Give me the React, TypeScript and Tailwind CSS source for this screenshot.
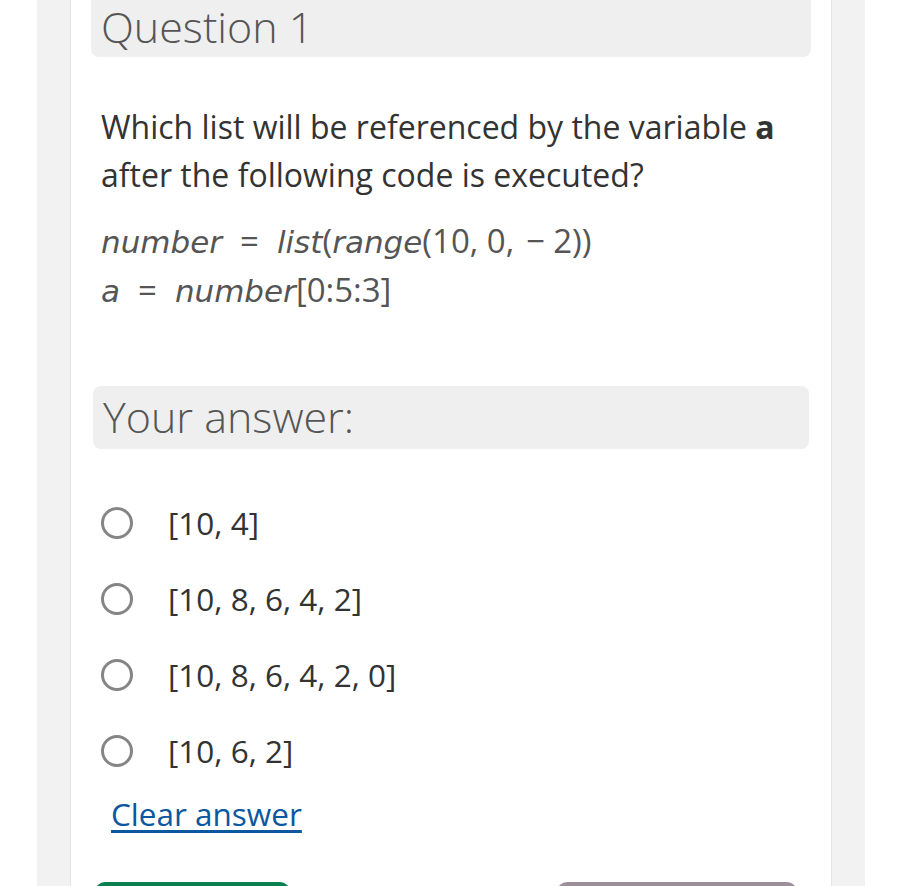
const options = ['[10, 4]', '[10, 8, 6, 4, 2]', '[10, 8, 6, 4, 2, 0]', '[10, 6, 2]']

function Radio() {
  return <span className="block w-[32px] h-[32px] rounded-full border-[3px] border-[#858585] bg-white shrink-0" />
}

// italic identifier in the formula
function V({ children }: { children: string }) {
  return (
    <i className="text-[31px]" style={{ fontFamily: '"DejaVu Sans", sans-serif' }}>
      {children}
    </i>
  )
}

export default function App() {
  return (
    <div className="min-h-screen bg-white" style={{ fontFamily: '"Open Sans", "Liberation Sans", sans-serif' }}>
      <div className="ml-[37px] w-[828px] h-[886px] overflow-hidden bg-[#f2f2f2] px-[33px]">
        <div className="h-full bg-white border-x border-[#e4e4e4] pl-[20px] pr-[20px]">
          {/* header */}
          <div className="h-[57px] bg-[#efefef] rounded-b-[8px] px-[10px] flex items-center">
            <h2 className="text-[43px] leading-[50px] font-light text-[#555] -mt-[3px]">Question 1</h2>
          </div>

          <p className="mt-[46px] px-[10px] text-[32px] leading-[48px] text-[#333]">
            Which list will be referenced by the variable <b className="font-bold">a</b> after the following code is executed?
          </p>

          <div className="mt-[18px] px-[10px] text-[33px] leading-[48px] text-[#555] whitespace-nowrap">
            <div>
              <V>number</V>
              <span className="mx-[18px]">=</span>
              <V>list</V>(<V>range</V>(10, 0,<span className="ml-[12px] mr-[8px]">−</span>2))
            </div>
            <div>
              <V>a</V>
              <span className="mx-[18px]">=</span>
              <V>number</V>[0:5:3]
            </div>
          </div>

          <div className="mt-[71px] ml-[2px] mr-[2px] h-[63px] bg-[#efefef] rounded-[8px] px-[10px] flex items-center">
            <span className="text-[43px] font-light text-[#555]">Your answer:</span>
          </div>

          <div className="mt-[58px] flex flex-col gap-[44px] px-[10px]">
            {options.map((o) => (
              <label key={o} className="flex items-center gap-[35px] h-[32px]">
                <Radio />
                <span className="text-[31.5px] text-[#333]">{o}</span>
              </label>
            ))}
          </div>

          <a href="#" className="block mt-[27px] ml-[20px] text-[31.5px] leading-[40px] text-[#0b57a0] underline underline-offset-[4px] w-fit">
            Clear answer
          </a>

          <div className="mt-[48px] flex justify-between pl-[4px] pr-[14px]">
            <button className="w-[195px] h-[44px] rounded-[10px] bg-[#0a7f50]" />
            <button className="w-[240px] h-[44px] rounded-[10px] bg-[#9c8f99]" />
          </div>
        </div>
      </div>
    </div>
  )
}
